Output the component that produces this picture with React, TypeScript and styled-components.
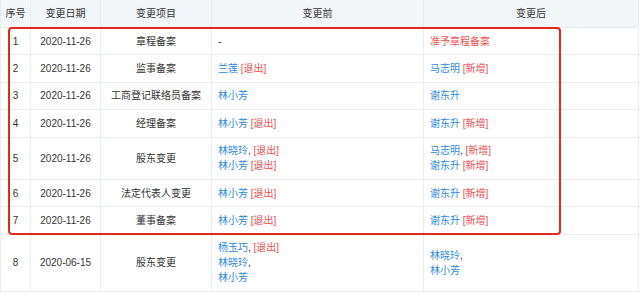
import React from 'react';
import styled, { createGlobalStyle } from 'styled-components';

const GlobalStyle = createGlobalStyle`
  html, body {
    margin: 0;
    padding: 0;
    background: #fff;
  }
  body {
    font-family: "Liberation Sans", "Noto Sans CJK SC", sans-serif;
  }
`

const Wrapper = styled.div`
  position: relative;
  width: 638px;
`

const Tabela = styled.table`
  width: 638px;
  border-collapse: collapse;
  table-layout: fixed;
  font-size: 10px;
  color: #333;
`

const Cabecalho = styled.th`
  height: 27px;
  padding: 0;
  background: #f2f6f9;
  border: 1px solid #e4ebf1;
  border-top: none;
  font-weight: 400;
  color: #333;
  text-align: center;
  line-height: 15px;
`

const Celula = styled.td<{ $alinhar?: 'left' | 'center' }>`
  padding: 5.7px 6px;
  border: 1px solid #e8eef3;
  text-align: ${({ $alinhar }) => $alinhar ?? 'center'};
  line-height: 15px;
  vertical-align: middle;
  color: #333;
  white-space: nowrap;
`

const Linha = styled.div`
  line-height: 15px;
`

const Trecho = styled.span<{ $tipo: Tipo }>`
  color: ${({ $tipo }) => ($tipo === 'link' ? '#2a88e4' : $tipo === 'red' ? '#f2504f' : '#333')};
`

const Destaque = styled.div`
  position: absolute;
  left: 8px;
  top: 27px;
  width: 553px;
  height: 208px;
  box-sizing: border-box;
  border: 2px solid #e3281e;
  border-radius: 4px;
  pointer-events: none;
`

type Tipo = 'link' | 'red' | 'plain'
type Segmento = [string, Tipo]
type Registro = {
  num: number
  data: string
  item: string
  antes: Segmento[][]
  depois: Segmento[][]
}

const sair: Segmento = [' [退出]', 'red']
const novo: Segmento = [' [新增]', 'red']

const registros: Registro[] = [
  { num: 1, data: '2020-11-26', item: '章程备案', antes: [[['-', 'plain']]], depois: [[['准予章程备案', 'red']]] },
  { num: 2, data: '2020-11-26', item: '监事备案', antes: [[['兰莲', 'link'], sair]], depois: [[['马志明', 'link'], novo]] },
  { num: 3, data: '2020-11-26', item: '工商登记联络员备案', antes: [[['林小芳', 'link']]], depois: [[['谢东升', 'link']]] },
  { num: 4, data: '2020-11-26', item: '经理备案', antes: [[['林小芳', 'link'], sair]], depois: [[['谢东升', 'link'], novo]] },
  {
    num: 5, data: '2020-11-26', item: '股东变更',
    antes: [[['林晓玲', 'link'], [',', 'plain'], sair], [['林小芳', 'link'], sair]],
    depois: [[['马志明', 'link'], [',', 'plain'], novo], [['谢东升', 'link'], novo]],
  },
  { num: 6, data: '2020-11-26', item: '法定代表人变更', antes: [[['林小芳', 'link'], sair]], depois: [[['谢东升', 'link'], novo]] },
  { num: 7, data: '2020-11-26', item: '董事备案', antes: [[['林小芳', 'link'], sair]], depois: [[['谢东升', 'link'], novo]] },
  {
    num: 8, data: '2020-06-15', item: '股东变更',
    antes: [[['杨玉巧', 'link'], [',', 'plain'], sair], [['林晓玲', 'link'], [',', 'plain']], [['林小芳', 'link']]],
    depois: [[['林晓玲', 'link'], [',', 'plain']], [['林小芳', 'link']]],
  },
]

const Conteudo = ({ linhas }: { linhas: Segmento[][] }) => (
  <>
    {linhas.map((linha, i) => (
      <Linha key={i}>
        {linha.map(([texto, tipo], j) => (
          <Trecho key={j} $tipo={tipo}>{texto}</Trecho>
        ))}
      </Linha>
    ))}
  </>
)

export default function App() {
  return (
    <>
      <GlobalStyle />
      <Wrapper>
        <Tabela>
          <colgroup>
            <col style={{ width: 30 }} />
            <col style={{ width: 70 }} />
            <col style={{ width: 111 }} />
            <col style={{ width: 212 }} />
            <col style={{ width: 215 }} />
          </colgroup>
          <thead>
            <tr>
              <Cabecalho>序号</Cabecalho>
              <Cabecalho>变更日期</Cabecalho>
              <Cabecalho>变更项目</Cabecalho>
              <Cabecalho>变更前</Cabecalho>
              <Cabecalho>变更后</Cabecalho>
            </tr>
          </thead>
          <tbody>
            {registros.map(r => (
              <tr key={r.num}>
                <Celula>{r.num}</Celula>
                <Celula>{r.data}</Celula>
                <Celula>{r.item}</Celula>
                <Celula $alinhar="left"><Conteudo linhas={r.antes} /></Celula>
                <Celula $alinhar="left"><Conteudo linhas={r.depois} /></Celula>
              </tr>
            ))}
          </tbody>
        </Tabela>
        <Destaque />
      </Wrapper>
    </>
  )
}
